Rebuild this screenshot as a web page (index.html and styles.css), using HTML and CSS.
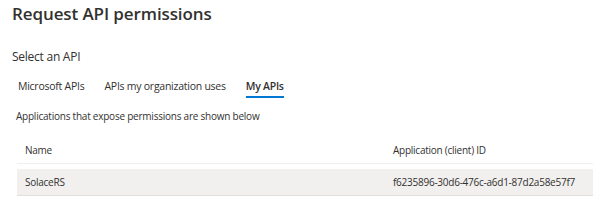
FILE: index.html
```html
<!DOCTYPE html>
<html>
<head>
<meta charset="utf-8">
<link rel="stylesheet" href="styles.css">
</head>
<body>
<div class="panel">
  <h1 class="title">Request API permissions</h1>
  <div class="section-label">Select an API</div>
  <div class="tabs">
    <div class="tab">Microsoft APIs</div>
    <div class="tab">APIs my organization uses</div>
    <div class="tab tab-active">My APIs</div>
  </div>
  <div class="hint">Applications that expose permissions are shown below</div>
  <div class="table">
    <div class="row row-head">
      <div class="cell cell-name">Name</div>
      <div class="cell cell-id">Application (client) ID</div>
    </div>
    <div class="row row-item">
      <div class="cell cell-name">SolaceRS</div>
      <div class="cell cell-id">f6235896-30d6-476c-a6d1-87d2a58e57f7</div>
    </div>
  </div>
</div>
</body>
</html>
```
FILE: styles.css
```css
html, body {
  margin: 0;
  padding: 0;
  background: #ffffff;
}
body {
  font-family: "Open Sans", "Noto Sans", sans-serif;
  color: #323130;
}
.panel {
  padding: 0 7px 0 12px;
}
.title {
  margin: 0;
  padding-top: 2px;
  font-size: 17px;
  line-height: 24px;
  font-weight: 600;
  letter-spacing: -0.1px;
}
.section-label {
  margin-top: 23px;
  font-size: 12px;
  line-height: 16px;
  letter-spacing: -0.25px;
}
.tabs {
  display: flex;
  gap: 20px;
  margin-top: 13px;
  padding-left: 6px;
}
.tab {
  font-size: 10.5px;
  line-height: 16px;
  letter-spacing: -0.25px;
  padding-bottom: 2px;
  border-bottom: 2px solid transparent;
}
.tab-active {
  font-weight: 600;
  border-bottom-color: #0078d4;
}
.hint {
  margin-top: 11px;
  padding-left: 4px;
  font-size: 10px;
  line-height: 14px;
  letter-spacing: -0.23px;
}
.table {
  margin-top: 14px;
  margin-left: 5px;
}
.row {
  display: flex;
  align-items: center;
}
.row-head {
  height: 26px;
  border-bottom: 1px solid #f0efee;
  font-weight: 500;
}
.row-head .cell {
  letter-spacing: -0.25px;
}
.row-item {
  margin-top: 5px;
  height: 26px;
  background: #f1f0ef;
  border-bottom: 1px solid #e1dfdd;
}
.cell {
  font-size: 10px;
  line-height: 14px;
  letter-spacing: -0.25px;
}
.cell-name {
  width: 368px;
  padding-left: 8px;
}
.cell-id {
  flex: 1;
}
```
